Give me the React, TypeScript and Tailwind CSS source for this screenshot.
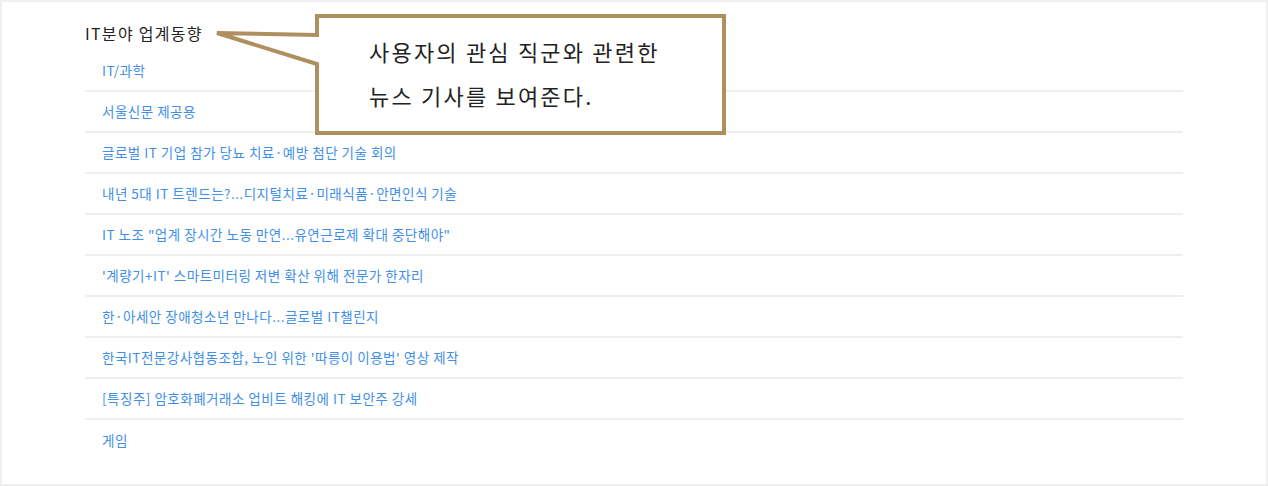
const news = [
  'IT/과학',
  '서울신문 제공용',
  '글로벌 IT 기업 참가 당뇨 치료·예방 첨단 기술 회의',
  '내년 5대 IT 트렌드는?...디지털치료·미래식품·안면인식 기술',
  'IT 노조 "업계 장시간 노동 만연...유연근로제 확대 중단해야"',
  "'계량기+IT' 스마트미터링 저변 확산 위해 전문가 한자리",
  '한·아세안 장애청소년 만나다...글로벌 IT챌린지',
  "한국IT전문강사협동조합, 노인 위한 '따릉이 이용법' 영상 제작",
  '[특징주] 암호화폐거래소 업비트 해킹에 IT 보안주 강세',
  '게임',
];

function Callout() {
  return (
    <div className="pointer-events-none absolute left-0 top-0">
      <svg width="740" height="140" className="block">
        <path
          d="M315 33 L315 14 L722 14 L722 131 L315 131 L315 62 L215 31 Z"
          fill="#ffffff"
          stroke="#ae8f5d"
          strokeWidth="4"
          strokeLinejoin="miter"
        />
      </svg>
      <div className="absolute left-[367px] top-[27px] text-[22px] leading-[44px] tracking-[2.2px] text-[#222222]">
        <div>사용자의 관심 직군와 관련한</div>
        <div>뉴스 기사를 보여준다.</div>
      </div>
    </div>
  );
}

export default function App() {
  return (
    <div
      className="relative h-[486px] w-[1268px] border-2 border-[#efefef] bg-white"
      style={{ fontFamily: '"Noto Sans CJK KR", "Noto Sans", sans-serif' }}
    >
      <div className="pl-[83px] pt-[19px]">
        <h2 className="mb-[6px] h-[24px] text-[16px] leading-[24px] font-normal tracking-[1.3px] text-[#222222]">
          IT분야 업계동향
        </h2>
        <ul className="w-[1098px]">
          {news.map((title, i) => (
            <li
              key={title}
              className={`flex h-[41px] items-center pl-[17px] text-[13.5px] tracking-[0.5px] text-[#428fe8] ${
                i < news.length - 1 ? 'border-b-2 border-[#eeeeee]' : ''
              }`}
            >
              {title}
            </li>
          ))}
        </ul>
      </div>
      <Callout />
    </div>
  );
}
